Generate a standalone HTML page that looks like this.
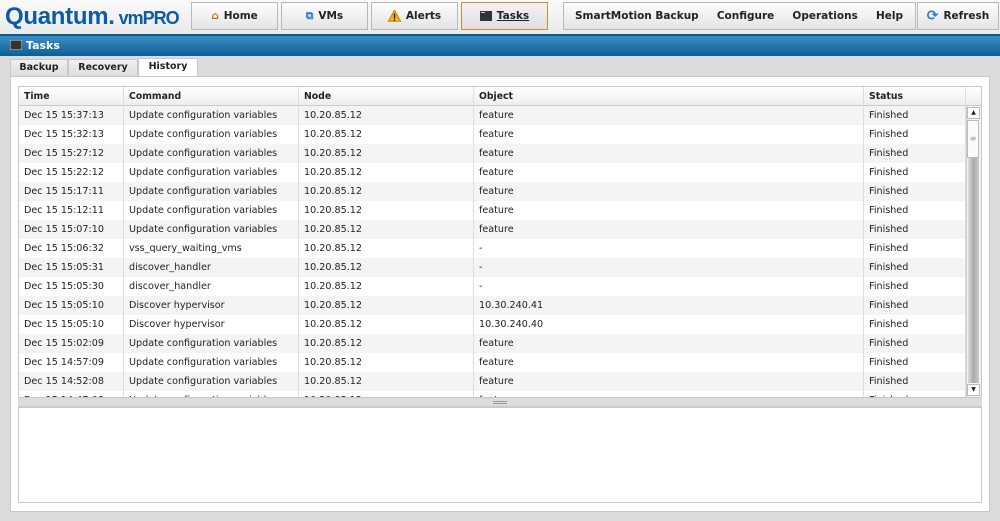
<!DOCTYPE html>
<html><head><style>
*{box-sizing:border-box;margin:0;padding:0}
body{width:1000px;height:521px;background:#dcdcdc;font-family:"DejaVu Sans","Liberation Sans",sans-serif;position:relative;overflow:hidden;color:#222}
.abs{position:absolute}
.top{left:0;top:0;width:1000px;height:34px;background:linear-gradient(#fafafa,#eaeaea)}
.logo{left:5px;top:3px;font-family:"Liberation Sans",sans-serif;font-weight:bold;font-size:24px;color:#0d5aa7;letter-spacing:-0.3px}
.logo span{font-size:18px;letter-spacing:-1px}
.btn{top:2px;height:28px;border:1px solid #b8b8b8;background:linear-gradient(#fdfdfd,#e4e4e4);font-size:10.5px;font-weight:bold;display:flex;align-items:center;justify-content:center;gap:5px;color:#222}
.bar{left:0;top:34px;width:1000px;height:22px;background:linear-gradient(#3d8fc4,#0a5f96);border-top:2px solid #0a5a90;color:#fff;font-size:11px;font-weight:bold;padding:3px 0 0 10px}
.tab{top:59px;height:17px;border:1px solid #c8c8c8;border-bottom:none;background:linear-gradient(#f0f0f0,#dcdcdc);font-size:9.5px;font-weight:bold;text-align:center;line-height:15px}
.panel{left:10px;top:76px;width:980px;height:436px;background:#fff;border:1px solid #c8c8c8}
.grid{left:18px;top:86px;width:964px;height:312px;border:1px solid #c8c8c8;overflow:hidden;background:#fff}
.row{position:absolute;left:0;height:19px;width:947px;font-size:9.6px;line-height:19px}
.row div{position:absolute;top:0;height:19px;border-right:1px solid #ddd;padding-left:5px;white-space:nowrap}
.hdr{background:linear-gradient(#fff,#eee);font-weight:bold;border-bottom:1px solid #ccc;font-size:9.3px}
.c1{left:0;width:105px}.c2{left:105px;width:175px}.c3{left:280px;width:175px}.c4{left:455px;width:390px}.c5{left:845px;width:102px}
</style></head><body>
<div class="abs top"></div>
<div class="abs logo">Quantum.<span> vmPRO</span></div>
<div class="abs btn" style="left:191px;width:87px"><span style="color:#c96a1a">&#8962;</span>Home</div>
<div class="abs btn" style="left:281px;width:87px"><span style="color:#2a7bd0">&#10697;</span>VMs</div>
<div class="abs btn" style="left:371px;width:87px"><svg width="13" height="12"><path d="M6.5 0L13 12H0Z" fill="#f2b01e" stroke="#c98a00"/><rect x="5.8" y="3.5" width="1.4" height="5" fill="#222"/><rect x="5.8" y="9.5" width="1.4" height="1.4" fill="#222"/></svg>Alerts</div>
<div class="abs btn" style="left:461px;width:87px;border:1px solid #d08a3a;background:linear-gradient(#f4f4f4,#dedede)"><svg width="12" height="10"><rect width="12" height="10" fill="#333"/><rect x="1" y="1" width="4" height="1" fill="#ccc"/></svg><u>Tasks</u></div>
<div class="abs btn" style="left:563px;width:353px;justify-content:space-between;padding:0 12px 0 11px"><span>SmartMotion Backup</span><span>Configure</span><span>Operations</span><span>Help</span></div>
<div class="abs btn" style="left:917px;width:82px"><span style="color:#2a7bd0;font-size:14px">&#10227;</span>Refresh</div>
<div class="abs bar"><svg width="12" height="10" style="vertical-align:-1px;margin-right:4px"><rect width="12" height="10" fill="#333" stroke="#ddd"/></svg>Tasks</div>
<div class="abs tab" style="left:10px;width:58px">Backup</div>
<div class="abs tab" style="left:68px;width:70px">Recovery</div>
<div class="abs tab" style="left:138px;width:60px;background:#fff;height:18px;top:58px">History</div>
<div class="abs panel"></div>
<div class="abs grid">
<div class="row hdr" style="top:0"><div class="c1">Time</div><div class="c2">Command</div><div class="c3">Node</div><div class="c4">Object</div><div class="c5">Status</div></div>
<div id="rows"></div>
<div class="abs" style="left:947px;top:0;width:16px;height:19px;background:linear-gradient(#fff,#eee);border-bottom:1px solid #ccc"></div>
<div class="abs" style="left:947px;top:19px;width:16px;height:293px;background:#f3f3f3;border-left:1px solid #ccc"></div>
<div class="abs" style="left:948px;top:20px;width:13px;height:12px;border:1px solid #bbb;background:#fff;font-size:6px;text-align:center;line-height:10px">&#9650;</div>
<div class="abs" style="left:948px;top:33px;width:12px;height:38px;border:1px solid #bbb;background:#fafafa;font-size:8px;text-align:center;line-height:36px;color:#999">&#8801;</div>
<div class="abs" style="left:949px;top:71px;width:11px;height:225px;background:linear-gradient(90deg,#ddd,#aaa,#ccc)"></div>
<div class="abs" style="left:948px;top:297px;width:13px;height:12px;border:1px solid #bbb;background:#fff;font-size:6px;text-align:center;line-height:10px">&#9660;</div>
</div>
<div class="abs" style="left:18px;top:398px;width:964px;height:9px;background:#dcdcdc;border-bottom:1px solid #ccc"><div style="margin:3px auto 0;width:14px;border-top:1px solid #999;border-bottom:1px solid #999;height:3px"></div></div>
<div class="abs" style="left:18px;top:407px;width:964px;height:96px;border:1px solid #c8c8c8;background:#fff"></div>
<script>
var d=[["15:37:13","Update configuration variables","feature"],["15:32:13","Update configuration variables","feature"],["15:27:12","Update configuration variables","feature"],["15:22:12","Update configuration variables","feature"],["15:17:11","Update configuration variables","feature"],["15:12:11","Update configuration variables","feature"],["15:07:10","Update configuration variables","feature"],["15:06:32","vss_query_waiting_vms","-"],["15:05:31","discover_handler","-"],["15:05:30","discover_handler","-"],["15:05:10","Discover hypervisor","10.30.240.41"],["15:05:10","Discover hypervisor","10.30.240.40"],["15:02:09","Update configuration variables","feature"],["14:57:09","Update configuration variables","feature"],["14:52:08","Update configuration variables","feature"],["14:47:08","Update configuration variables","feature"]];
var h="";d.forEach(function(r,i){h+='<div class="row" style="top:'+(19+i*19)+'px;background:'+(i%2?'#fff':'#f4f4f4')+'"><div class="c1">Dec 15 '+r[0]+'</div><div class="c2">'+r[1]+'</div><div class="c3">10.20.85.12</div><div class="c4">'+r[2]+'</div><div class="c5">Finished</div></div>'});
document.getElementById("rows").innerHTML=h;
</script>
</body></html>
